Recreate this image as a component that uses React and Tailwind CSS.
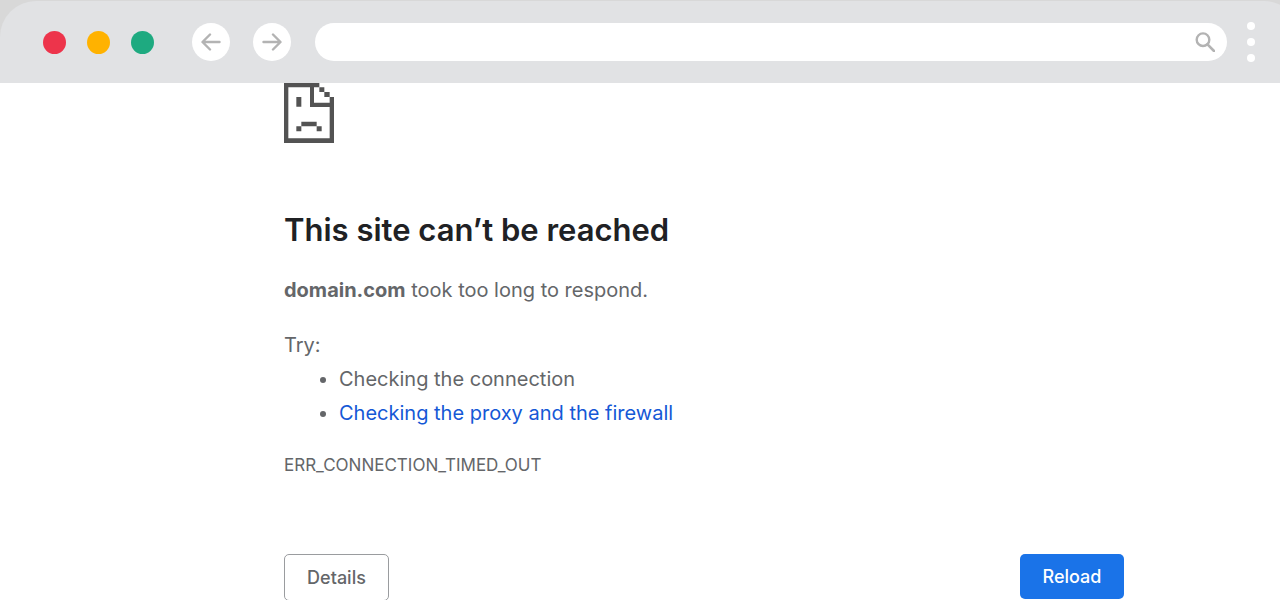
function Arrow({ back }) {
  return (
    <svg viewBox="0 0 20 18" className="h-[18px] w-5" fill="none" stroke="#b3b3b3" strokeWidth="2.4" strokeLinecap="round" strokeLinejoin="round" aria-hidden="true">
      <path d={back ? "M18.5 9H2M9 1.5L1.500 9L9 16.500" : "M1.500 9H18M11 1.500L18.500 9L11 16.500"} />
    </svg>
  );
}

function SadPage() {
  return (
    <svg viewBox="0 0 150 180" className="block h-[60px] w-[50px]" fill="#535353" aria-hidden="true">
      <path d="M0 0H106V13H90V59H137V42H150V180H0ZM13 13V166H137V72H78V13Z" fillRule="evenodd" />
      <path d="M106 13h15v14h-15zM121 27h16v15h-16zM37 42h15v29h-15zM52 116h46v14h-46zM37 130h15v15h-15zM98 130h15v15h-15z" />
    </svg>
  );
}

function Toolbar() {
  return (
    <div className="overflow-hidden bg-[#d8d8d8] pt-px">
      <header className="-mr-5 flex h-[82px] items-center rounded-t-[36px] bg-[#e1e2e4] pr-[45px] pl-[43px]">
        <div className="flex gap-[21px]">
          <span className="size-[23px] rounded-full bg-[#ed344b]" />
          <span className="size-[23px] rounded-full bg-[#ffb200]" />
          <span className="size-[23px] rounded-full bg-[#1eaa80]" />
        </div>
        <nav className="ml-[38px] flex gap-[23px]">
          <button type="button" aria-label="Back" className="flex size-[38px] items-center justify-center rounded-full bg-white">
            <Arrow back />
          </button>
          <button type="button" aria-label="Forward" className="flex size-[38px] items-center justify-center rounded-full bg-white">
            <Arrow />
          </button>
        </nav>
        <div className="ml-6 flex h-[38px] flex-1 items-center rounded-full bg-white pr-3 pl-5">
          <input type="text" aria-label="Address" className="h-full min-w-0 flex-1 bg-transparent font-[Inter,sans-serif] outline-none" />
          <svg viewBox="0 0 20 20" className="size-5" fill="none" stroke="#b3b3b3" strokeWidth="2.4" aria-hidden="true">
            <circle cx="8" cy="7.700" r="6.300" />
            <path d="M12.500 12.300L19 19" strokeWidth="2.600" strokeLinecap="round" />
          </svg>
        </div>
        <button type="button" aria-label="Menu" className="ml-5 flex flex-col gap-2">
          <span className="size-2 rounded-full bg-white" />
          <span className="size-2 rounded-full bg-white" />
          <span className="size-2 rounded-full bg-white" />
        </button>
      </header>
    </div>
  );
}

export default function App() {
  return (
    <div className="h-screen overflow-hidden bg-white font-[Inter,sans-serif] text-[#646669]">
      <Toolbar />
      <main className="mr-[156px] ml-[284px]">
        <SadPage />
        <h1 className="mt-[66px] text-[31px] leading-[42px] font-semibold text-[#202124]">This site can’t be reached</h1>
        <p className="mt-[22px] text-[20px] leading-[34px]">
          <strong className="font-bold">domain.com</strong> took too long to respond.
        </p>
        <p className="mt-[21px] text-[20px] leading-[34px]">Try:</p>
        <ul className="list-disc pl-[55px] text-[20px] leading-[34px]">
          <li>Checking the connection</li>
          <li>
            <a href="#proxy" className="text-[#1558d6]">Checking the proxy and the firewall</a>
          </li>
        </ul>
        <p className="mt-[18px] text-[17px] leading-[34px]">ERR_CONNECTION_TIMED_OUT</p>
        <div className="mt-[72px] flex items-start justify-between">
          <button type="button" className="h-[47px] w-[105px] rounded-[5px] border border-[#9a9c9f] text-[18px] font-medium">Details</button>
          <button type="button" className="h-[45px] w-[104px] rounded-[5px] bg-[#1a73e8] text-[18px] font-medium text-white">Reload</button>
        </div>
      </main>
    </div>
  );
}
